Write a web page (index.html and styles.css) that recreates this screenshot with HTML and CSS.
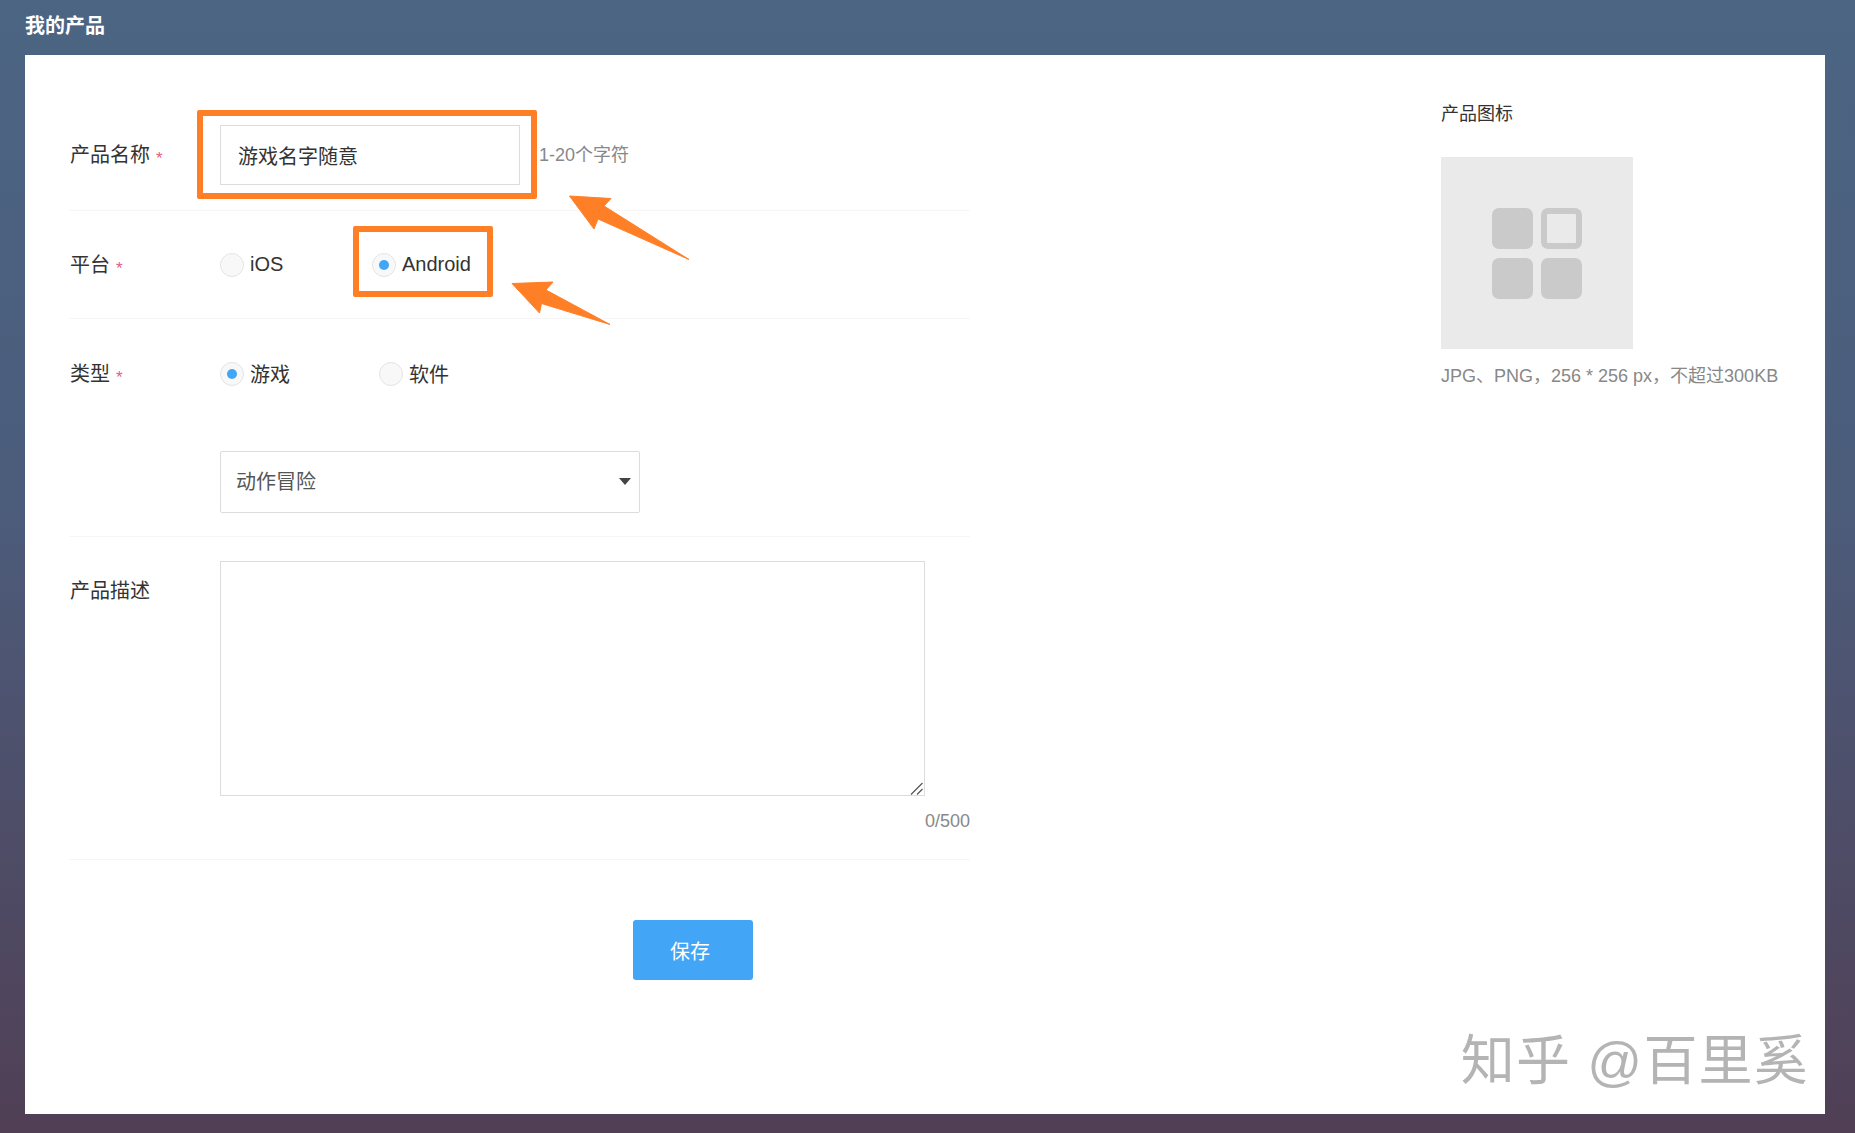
FILE: index.html
```html
<!DOCTYPE html>
<html lang="zh-CN">
<head>
<meta charset="utf-8">
<title>我的产品</title>
<link rel="stylesheet" href="styles.css">
</head>
<body>
<header class="topbar">我的产品</header>
<main class="card">
  <form class="form">
    <div class="row row-name">
      <div class="label">产品名称<span class="req">*</span></div>
      <div class="field-inline">
        <div class="marked">
          <input class="text-input" type="text" value="游戏名字随意">
          <span class="mark mark-name"></span>
        </div>
        <span class="hint">1-20个字符</span>
      </div>
    </div>
    <div class="row">
      <div class="label">平台<span class="req">*</span></div>
      <div class="radios">
        <label class="radio radio-ios"><span class="dot"></span>iOS</label>
        <label class="radio marked"><span class="dot on"></span>Android<span class="mark mark-android"></span></label>
      </div>
    </div>
    <div class="row row-type">
      <div class="label">类型<span class="req">*</span></div>
      <div>
        <div class="radios">
          <label class="radio radio-game"><span class="dot on"></span>游戏</label>
          <label class="radio"><span class="dot"></span>软件</label>
        </div>
        <div class="select-wrap">
          <select class="select"><option>动作冒险</option></select>
        </div>
      </div>
    </div>
    <div class="row row-desc">
      <div class="label">产品描述</div>
      <div>
        <div class="textarea-wrap">
          <textarea class="textarea"></textarea>
          <svg class="grip" viewBox="0 0 13 13" aria-hidden="true">
            <path d="M1 12.5 12.5 1M7 12.5 12.5 7"/>
          </svg>
        </div>
        <div class="count">0/500</div>
      </div>
    </div>
    <button class="save" type="button">保存</button>
  </form>
  <aside class="side">
    <div class="side-title">产品图标</div>
    <div class="icon-box">
      <div class="tiles">
        <span class="tile"></span>
        <span class="tile tile-hollow"></span>
        <span class="tile"></span>
        <span class="tile"></span>
      </div>
    </div>
    <div class="side-hint">JPG、PNG，256 * 256 px，不超过300KB</div>
  </aside>
  <div class="watermark">知乎 @百里奚</div>
</main>
<svg class="arrows" viewBox="0 0 1855 1133" aria-hidden="true">
  <polygon points="569.5,196 611,198.5 604,206 689,259.5 598,219 594,229"/>
  <polygon points="512,283.5 553,282 546,290 610,324.5 541.5,303.5 539.5,313"/>
</svg>
</body>
</html>
```
FILE: styles.css
```css
* { box-sizing: border-box; }
html, body { margin: 0; height: 1133px; }
body {
  position: relative;
  overflow: hidden;
  padding: 0 30px 0 25px;
  background: linear-gradient(180deg, #4b6583 0%, #4c5c7b 45%, #503f55 100%);
  font-family: "Liberation Sans", "Noto Sans CJK SC", sans-serif;
  font-size: 20px;
  color: #333;
}
.topbar {
  height: 55px;
  line-height: 52px;
  color: #fff;
  font-weight: 700;
}
.card {
  position: relative;
  display: flex;
  height: 1059px;
  background: #fff;
}
.form { flex: none; width: 945px; padding: 46px 0 0 44px; }
.row {
  display: grid;
  grid-template-columns: 151px 1fr;
  padding: 24px 0 23px;
  border-bottom: 1px solid #f6f6f6;
}
.row-name { padding-bottom: 25px; }
.row-type { padding: 25px 0 23px; }
.row-desc { height: 323px; padding: 24px 0 0; }
.label { height: 60px; padding-left: 1px; line-height: 60px; }
.req {
  margin-left: 6px;
  vertical-align: -2px;
  color: #e0608a;
  font-size: 17px;
  line-height: 1;
}
.field-inline { display: flex; }
.marked { position: relative; }
.mark {
  position: absolute;
  border: 6.5px solid #ff7f27;
  border-radius: 2px;
  pointer-events: none;
}
.mark-name { top: -15px; left: -23px; width: 340px; height: 89px; }
.mark-android { top: -9px; left: -19px; width: 140px; height: 71px; }
.text-input {
  display: block;
  width: 300px;
  height: 60px;
  padding: 0 17px;
  border: 1px solid #dcdcdc;
  outline: none;
  background: #fff;
  font: inherit;
  color: #333;
}
.hint { margin-left: 19px; line-height: 60px; font-size: 18px; color: #888; }
.radios { display: flex; height: 58px; }
.radio { display: flex; align-items: center; }
.radio-ios { width: 152px; }
.radio-game { width: 159px; }
.dot {
  position: relative;
  top: 1px;
  flex: none;
  width: 24px;
  height: 24px;
  margin-right: 6px;
  border: 1px solid #e4e4e4;
  border-radius: 50%;
  background: #f8f8f8;
}
.dot.on::after {
  content: "";
  position: absolute;
  top: 6px;
  left: 6px;
  width: 10px;
  height: 10px;
  border-radius: 50%;
  background: #42a5f5;
}
.select-wrap { position: relative; width: 420px; margin-top: 49px; }
.select-wrap::after {
  content: "";
  position: absolute;
  top: 27px;
  right: 9px;
  border-style: solid;
  border-width: 7px 6px 0;
  border-color: #444 transparent transparent;
}
.select {
  display: block;
  width: 100%;
  height: 62px;
  padding: 0 15px;
  border: 1px solid #dcdcdc;
  border-radius: 2px;
  outline: none;
  background: #fff;
  appearance: none;
  font: inherit;
  color: #555;
}
.textarea-wrap { position: relative; width: 705px; height: 235px; }
.textarea {
  display: block;
  width: 705px;
  height: 235px;
  border: 1px solid #dcdcdc;
  outline: none;
  background: #fff;
  resize: none;
}
.grip {
  position: absolute;
  right: 2px;
  bottom: 1px;
  width: 13px;
  height: 13px;
  fill: none;
  stroke: #555;
  stroke-width: 1.2;
}
.count {
  width: 750px;
  line-height: 51px;
  text-align: right;
  font-size: 18px;
  color: #888;
}
.save {
  display: block;
  width: 120px;
  height: 60px;
  margin: 60px 0 0 564px;
  padding: 0 6px 0 0;
  border: 0;
  border-radius: 3px;
  background: #42a5f5;
  font: inherit;
  color: #fff;
}
.side { flex: none; width: 855px; padding: 47px 0 0 471px; }
.side-title { line-height: 24px; font-size: 18px; }
.icon-box {
  display: flex;
  align-items: center;
  justify-content: center;
  width: 192px;
  height: 192px;
  margin-top: 31px;
  background: #eaeaea;
}
.tiles {
  display: grid;
  grid-template-columns: 41px 41px;
  grid-auto-rows: 41px;
  gap: 9px 8px;
}
.tile { border-radius: 7px; background: #cacaca; }
.tile-hollow { border: 6px solid #cacaca; background: #eaeaea; }
.side-hint { margin-top: 15px; line-height: 24px; font-size: 18px; color: #888; white-space: nowrap; }
.watermark {
  position: absolute;
  right: 16px;
  bottom: 18px;
  font-size: 54px;
  letter-spacing: 1.2px;
  line-height: 70px;
  color: #b4b4b4;
  white-space: nowrap;
}
.arrows {
  position: absolute;
  top: 0;
  left: 0;
  width: 1855px;
  height: 1133px;
  fill: #ff7f27;
  stroke: #ff7f27;
  stroke-width: 1;
  stroke-linejoin: round;
  pointer-events: none;
}
```
